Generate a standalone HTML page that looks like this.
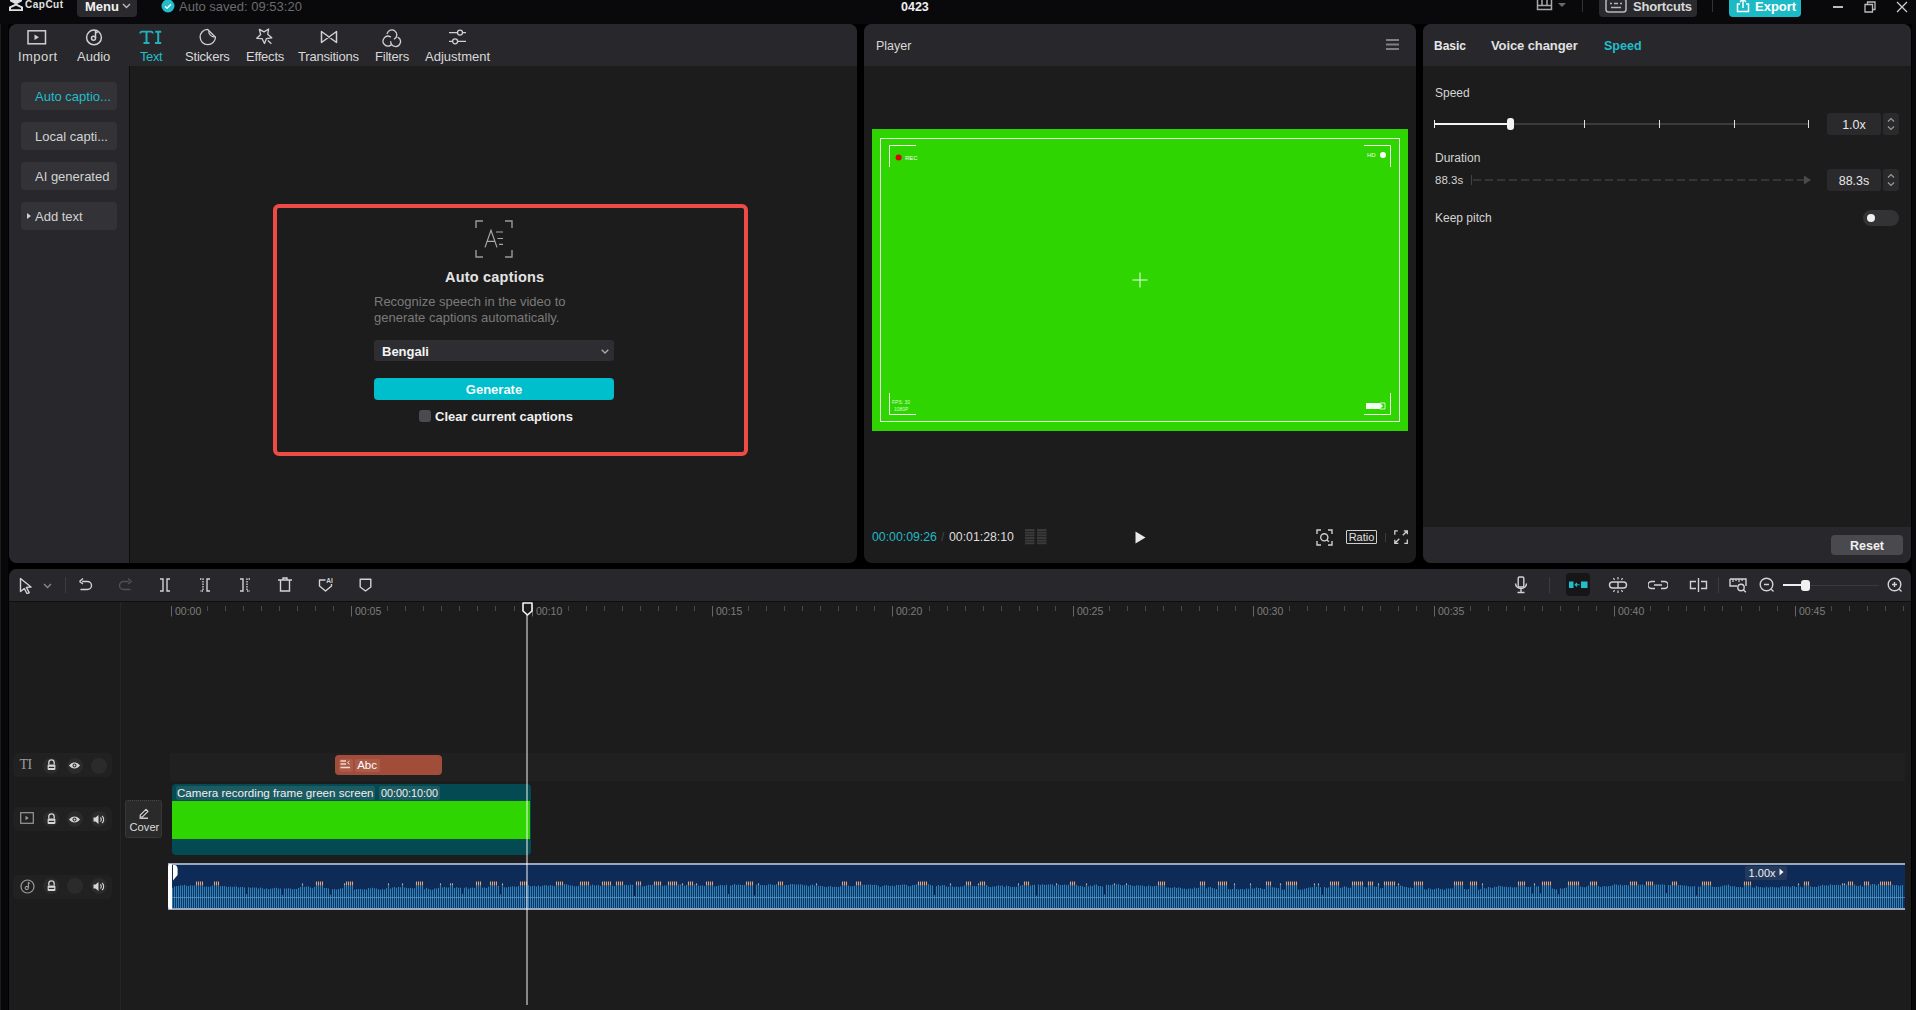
<!DOCTYPE html>
<html><head><meta charset="utf-8">
<style>
*{margin:0;padding:0;box-sizing:border-box}
html,body{width:1916px;height:1010px;overflow:hidden;background:#000;font-family:"Liberation Sans",sans-serif;color:#d6d6d6}
.a{position:absolute}
.t{position:absolute;white-space:nowrap;line-height:1}
#title{left:0;top:0;width:1916px;height:24px;background:#09090c}
.panel{position:absolute;background:#1c1c1c;border-radius:8px;overflow:hidden}
.hdr{position:absolute;left:0;top:0;right:0;height:42px;background:#28282c}
.lbl{font-size:13px;color:#d8d8d8}
.sbtn{position:absolute;left:12px;width:96px;height:28px;background:#333337;border-radius:4px}
.sbtn span{position:absolute;left:14px;top:7px;font-size:13px;color:#d2d2d2;white-space:nowrap}
</style></head>
<body>
<div class="a" style="left:0;top:0;width:8px;height:1010px;background:#08080a"></div><div class="a" style="left:0;top:0;width:1px;height:1010px;background:#1c1c1c"></div><div class="a" style="left:1912px;top:0;width:4px;height:1010px;background:#08080a"></div>
<div id="title" class="a">
  <!-- logo -->
  <svg class="a" style="left:9px;top:-2px" width="14" height="13" viewBox="0 0 14 13"><path d="M1 0h12v3.2L7 6.5 1 3.2z" fill="#e0e0e0"/><path d="M1 12.2V9.3L7 6.5l6 2.8v2.9z" fill="none" stroke="#e0e0e0" stroke-width="2"/></svg>
  <div class="t" style="left:25px;top:0.4px;font-size:10px;font-weight:700;color:#e0e0e0;letter-spacing:0.5px">CapCut</div>
  <div class="a" style="left:77px;top:-4px;width:60px;height:21px;background:#2a2a2e;border-radius:4px"></div>
  <div class="t" style="left:85px;top:0px;font-size:13px;font-weight:700;color:#f2f2f2">Menu</div>
  <svg class="a" style="left:122px;top:3px" width="9" height="6" viewBox="0 0 9 6"><path d="M1 1l3.5 3.5L8 1" fill="none" stroke="#bbb" stroke-width="1.4"/></svg>
  <svg class="a" style="left:161px;top:-1px" width="14" height="14" viewBox="0 0 14 14"><circle cx="7" cy="7" r="6.5" fill="#22bdca"/><path d="M4 7.2l2 2 4-4" fill="none" stroke="#fff" stroke-width="1.4"/></svg>
  <div class="t" style="left:179px;top:0px;font-size:13px;color:#6b6b6b">Auto saved: 09:53:20</div>
  <div class="t" style="left:901px;top:1px;font-size:12.5px;font-weight:700;color:#f0f0f0">0423</div>
  <!-- layout icon -->
  <svg class="a" style="left:1536px;top:-3px" width="32" height="16" viewBox="0 0 32 16"><path d="M1.5 1.5h14v11h-14z M1.5 8.5h14 M6 1.5v7 M11 1.5v7" fill="none" stroke="#a8a8a8" stroke-width="1.5"/><path d="M22 6h8l-4 4z" fill="#6a6a6a"/></svg>
  <div class="a" style="left:1582px;top:0;width:1px;height:12px;background:#333"></div>
  <div class="a" style="left:1599px;top:-4px;width:98px;height:21px;background:#2a2a2e;border-radius:4px"></div>
  <svg class="a" style="left:1605px;top:-2px" width="22" height="16" viewBox="0 0 22 16"><rect x="1" y="1" width="20" height="13" rx="2.5" fill="none" stroke="#b8b8b8" stroke-width="1.5"/><path d="M5 5.5h2M9 5.5h4M15 5.5h2M6 9.5h10" stroke="#b8b8b8" stroke-width="1.4"/></svg>
  <div class="t" style="left:1633px;top:0px;font-size:13px;font-weight:700;color:#d8d8d8;letter-spacing:-0.2px">Shortcuts</div>
  <div class="a" style="left:1712px;top:0;width:1px;height:12px;background:#333"></div>
  <div class="a" style="left:1729px;top:-4px;width:72px;height:21px;background:#1cbac6;border-radius:4px"></div>
  <svg class="a" style="left:1735px;top:-2px" width="16" height="16" viewBox="0 0 16 16"><path d="M5 6H2.5v7.5h11V6H11 M8 10V1.5 M5 4l3-3 3 3" fill="none" stroke="#fff" stroke-width="1.5"/></svg>
  <div class="t" style="left:1755px;top:0px;font-size:13px;font-weight:700;color:#fff">Export</div>
  <div class="a" style="left:1833px;top:6px;width:10px;height:1.5px;background:#bbb"></div>
  <svg class="a" style="left:1864px;top:1px" width="12" height="12" viewBox="0 0 12 12"><path d="M1 3.5h7.5V11H1z M3.5 3.5V1H11v7.5H8.5" fill="none" stroke="#bbb" stroke-width="1.3"/></svg>
  <svg class="a" style="left:1896px;top:1px" width="12" height="12" viewBox="0 0 12 12"><path d="M1 1l10 10M11 1L1 11" stroke="#ccc" stroke-width="1.3"/></svg>
</div>

<!-- LEFT PANEL -->
<div class="panel" style="left:9px;top:24px;width:848px;height:539px">
  <div class="hdr">
    <svg class="a" style="left:18px;top:6px" width="20" height="15" viewBox="0 0 20 15"><rect x="1" y="0.8" width="17.5" height="13" fill="none" stroke="#d0d0d0" stroke-width="1.5"/><path d="M7.5 4.5v5.5l4.5-2.75z" fill="#d0d0d0"/></svg>
    <svg class="a" style="left:76px;top:5px" width="18" height="17" viewBox="0 0 18 17"><circle cx="9" cy="8.4" r="7.4" fill="none" stroke="#d0d0d0" stroke-width="1.5"/><circle cx="8.5" cy="9.2" r="2" fill="none" stroke="#d0d0d0" stroke-width="1.5"/><path d="M10.5 9V2.5l2 1.5" fill="none" stroke="#d0d0d0" stroke-width="1.5"/></svg>
    <svg class="a" style="left:130px;top:6px" width="24" height="15" viewBox="0 0 24 15"><path d="M1.2 3.6Q1.2 1.6 3 1.6H12Q13.8 1.6 13.8 3.6" fill="none" stroke="#22b0bc" stroke-width="1.8"/><path d="M7.5 2v11 M4.5 12.9h6 M16.2 1.7h6 M19.2 2v11 M16 12.9h6.2" stroke="#22b0bc" stroke-width="2"/></svg>
    <svg class="a" style="left:190px;top:4px" width="19" height="19" viewBox="0 0 19 19"><path d="M8.5 1.3A7.7 7.7 0 1 0 16.5 9.3L8.5 1.3" fill="none" stroke="#d0d0d0" stroke-width="1.3" stroke-linejoin="round"/><path d="M9.6 3.2Q10.2 8.2 15.6 9.2" fill="none" stroke="#d0d0d0" stroke-width="1.2"/></svg>
    <svg class="a" style="left:246px;top:4px" width="20" height="20" viewBox="0 0 20 20"><path d="M9.48 15.50L7.13 10.67L1.78 10.30L5.64 6.58L4.34 1.37L9.07 3.90L13.62 1.05L12.68 6.33L16.79 9.78L11.48 10.52z" fill="none" stroke="#d0d0d0" stroke-width="1.3" stroke-linejoin="round"/><path d="M12.8 12.4l3.6 3.3" stroke="#d0d0d0" stroke-width="1.3"/></svg>
    <svg class="a" style="left:311px;top:6px" width="18" height="14" viewBox="0 0 18 14"><path d="M1.5 1.5v11l15-11v11z" fill="none" stroke="#d0d0d0" stroke-width="1.5" stroke-linejoin="round"/></svg>
    <svg class="a" style="left:373px;top:5px" width="20" height="19" viewBox="0 0 20 19"><path d="M5.17 4.53A4.9 4.9 0 1 1 12.35 10.04 M8.45 7.86A4.9 4.9 0 1 0 8.81 16.11 M8.7 12.6A4.9 4.9 0 1 0 16.05 8.36" fill="none" stroke="#d0d0d0" stroke-width="1.3" stroke-linecap="round"/></svg>
    <svg class="a" style="left:439px;top:5px" width="20" height="16" viewBox="0 0 20 16"><path d="M1 3.6h17 M1 12.3h17" stroke="#d0d0d0" stroke-width="1.2"/><circle cx="12" cy="3.6" r="2.5" fill="#28282c" stroke="#d0d0d0" stroke-width="1.3"/><circle cx="7.1" cy="12.3" r="2.5" fill="#28282c" stroke="#d0d0d0" stroke-width="1.3"/></svg>
    <div class="t lbl" style="left:9px;top:26px;letter-spacing:0.45px">Import</div>
    <div class="t lbl" style="left:68px;top:26px">Audio</div>
    <div class="t lbl" style="left:131px;top:26px;color:#22bdca;letter-spacing:-0.4px">Text</div>
    <div class="t lbl" style="left:176px;top:26px;letter-spacing:-0.2px">Stickers</div>
    <div class="t lbl" style="left:237px;top:26px;letter-spacing:-0.2px">Effects</div>
    <div class="t lbl" style="left:289px;top:26px;letter-spacing:-0.2px">Transitions</div>
    <div class="t lbl" style="left:366px;top:26px;letter-spacing:-0.2px">Filters</div>
    <div class="t lbl" style="left:416px;top:26px">Adjustment</div>
  </div>
  <div class="a" style="left:0;top:42px;width:120px;height:497px;background:#28282c"></div>
  <div class="a" style="left:120px;top:42px;width:1px;height:497px;background:#0c0c0c"></div>
  
  <div class="a" style="left:264px;top:180px;width:475px;height:252px;border:4px solid #ee4a46;border-radius:6px"></div>
  <svg class="a" style="left:466px;top:196px" width="38" height="38" viewBox="0 0 38 38"><path d="M1 8V1h7 M30 1h7v7 M37 30v7h-7 M8 37H1v-7" fill="none" stroke="#9a9a9a" stroke-width="1.4"/><path d="M10 27.4l6-17 6 17 M12.2 21.4h7.6" fill="none" stroke="#a8a8a8" stroke-width="1.2"/><path d="M21 12h7 M22.5 18.5h5.5 M24 24.4h4" stroke="#a8a8a8" stroke-width="1.2"/></svg>
  <div class="t" style="left:436px;top:246px;font-size:14.5px;font-weight:700;color:#e4e4e4;letter-spacing:0.2px">Auto captions</div>
  <div class="t" style="left:365px;top:270px;font-size:13px;color:#7a7a7a;line-height:16px">Recognize speech in the video to<br>generate captions automatically.</div>
  <div class="a" style="left:365px;top:316px;width:240px;height:21px;background:#2e2e32;border-radius:3px"></div>
  <div class="t" style="left:373px;top:321px;font-size:13px;font-weight:700;color:#f4f4f4">Bengali</div>
  <svg class="a" style="left:592px;top:325px" width="8" height="5" viewBox="0 0 8 5"><path d="M0.7 0.7l3.3 3.3 3.3-3.3" fill="none" stroke="#aaa" stroke-width="1.3"/></svg>
  <div class="a" style="left:365px;top:354px;width:240px;height:22px;background:#00bfcc;border-radius:4px"></div>
  <div class="t" style="left:365px;top:359px;width:240px;text-align:center;font-size:13px;font-weight:700;color:#f4fbfc">Generate</div>
  <div class="a" style="left:410px;top:386px;width:12px;height:12px;background:#4b4b4f;border-radius:3px"></div>
  <div class="t" style="left:426px;top:386px;font-size:13px;font-weight:700;color:#f0f0f0">Clear current captions</div>
  <div class="sbtn" style="top:58px"><span style="color:#22bdca">Auto captio...</span></div>
  <div class="sbtn" style="top:98px"><span>Local capti...</span></div>
  <div class="sbtn" style="top:138px"><span>AI generated</span></div>
  <div class="sbtn" style="top:178px"><svg class="a" style="left:6px;top:11px" width="4" height="6" viewBox="0 0 4 6"><path d="M0 0l4 3-4 3z" fill="#d0d0d0"/></svg><span>Add text</span></div>
</div>

<!-- PLAYER -->
<div class="panel" style="left:864px;top:24px;width:552px;height:539px">
  <div class="hdr">
    <div class="t" style="left:12px;top:16px;font-size:12.5px;color:#d8d8d8">Player</div>
    <div class="a" style="left:522px;top:15px;width:13px;height:1.8px;background:#808080;box-shadow:0 4.5px 0 #808080,0 9px 0 #808080"></div>
  </div>
  <div class="a" style="left:8px;top:105px;width:536px;height:302px;background:#2ed500"></div>
  <div class="a" style="left:16px;top:114px;width:520px;height:284px;border:1px solid #e8f8e0"></div>
  <svg class="a" style="left:8px;top:105px" width="536" height="302" viewBox="0 0 536 302">
    <g fill="none" stroke="#f0fff0" stroke-width="1">
      <path d="M17.5 38V16.5H44 M492 16.5h26.5V38 M17.5 264v21.5H44 M492 285.5h26.5V264"/>
      <path d="M260.5 151h15 M268 143.5v15"/>
    </g>
    <circle cx="26.6" cy="28.5" r="3" fill="#e00000"/>
    <text x="33" y="31" font-size="6" fill="#f0fff0" font-family="Liberation Sans">REC</text>
    <text x="495" y="28" font-size="6" fill="#f0fff0" font-family="Liberation Sans">HD</text>
    <circle cx="511" cy="26" r="3" fill="#fff"/>
    <text x="20" y="275" font-size="5" fill="#d8f8d0" font-family="Liberation Sans">FPS: 30</text>
    <text x="22" y="282" font-size="5" fill="#d8f8d0" font-family="Liberation Sans">1080P</text>
    <path d="M494 274h14l3 3-3 3h-14z" fill="#f4fff4"/><path d="M508 274h5v6h-5" fill="none" stroke="#f4fff4" stroke-width="0.8"/>
  </svg>
  <div class="t" style="left:8px;top:507px;font-size:12.3px;color:#22b8c6">00:00:09:26</div>
  <div class="t" style="left:77px;top:507px;font-size:12px;color:#464646">/</div>
  <div class="t" style="left:85px;top:507px;font-size:12.3px;color:#dedede">00:01:28:10</div>
  <svg class="a" style="left:161px;top:505px" width="22" height="16" viewBox="0 0 22 16"><g fill="#3a3a3a"><rect x="0" y="0.00" width="9.5" height="2" /><rect x="0" y="2.65" width="9.5" height="2" /><rect x="0" y="5.30" width="9.5" height="2" /><rect x="0" y="7.95" width="9.5" height="2" /><rect x="0" y="10.60" width="9.5" height="2" /><rect x="0" y="13.25" width="9.5" height="2" /><rect x="12" y="0.00" width="9.5" height="2" /><rect x="12" y="2.65" width="9.5" height="2" /><rect x="12" y="5.30" width="9.5" height="2" /><rect x="12" y="7.95" width="9.5" height="2" /><rect x="12" y="10.60" width="9.5" height="2" /><rect x="12" y="13.25" width="9.5" height="2" /></g></svg>
  <svg class="a" style="left:271px;top:507px" width="11" height="13" viewBox="0 0 11 13"><path d="M0.5 0.5v12l10-6z" fill="#e8e8e8"/></svg>
  <svg class="a" style="left:452px;top:505px" width="17" height="17" viewBox="0 0 17 17"><path d="M1 5V1h4 M12 1h4v4 M16 12v4h-4 M5 16H1v-4" fill="none" stroke="#cfcfcf" stroke-width="1.4"/><circle cx="8.3" cy="8.3" r="3.6" fill="none" stroke="#cfcfcf" stroke-width="1.4"/><path d="M10.8 10.8l2 2" stroke="#cfcfcf" stroke-width="1.4"/></svg>
  <div class="a" style="left:482px;top:506px;width:31px;height:14px;border:1px solid #cfcfcf;border-radius:1px"></div>
  <div class="t" style="left:482px;top:508px;width:31px;text-align:center;font-size:11px;color:#e0e0e0">Ratio</div>
  <div class="a" style="left:521px;top:509px;width:1px;height:9px;background:#3a3a3a"></div>
  <svg class="a" style="left:530px;top:506px" width="15" height="15" viewBox="0 0 15 15"><path d="M0.8 4.7V0.8H3.8 M9.8 0.8H13.3V4.3 M13.3 0.8L8.8 5.3 M0.8 9.8V13.3H4.3 M0.8 13.3L5.3 8.8 M13.3 9.5V13.3H10.3" fill="none" stroke="#d0d0d0" stroke-width="1.3"/></svg>
</div>

<!-- PROPERTIES -->
<div class="panel" style="left:1423px;top:24px;width:488px;height:539px">
  <div class="hdr">
    <div class="t" style="left:11px;top:16px;font-size:12px;font-weight:700;color:#e8e8e8">Basic</div>
    <div class="t" style="left:68px;top:15.2px;font-size:13px;font-weight:700;color:#e0e0e0;letter-spacing:-0.1px">Voice changer</div>
    <div class="t" style="left:181px;top:16px;font-size:12.5px;font-weight:700;color:#22bdca">Speed</div>
  </div>
  <div class="t" style="left:12px;top:63px;font-size:12px;color:#d4d4d4">Speed</div>
  <div class="a" style="left:11px;top:99px;width:375px;height:1.5px;background:#3a3a3c"></div>
  <div class="a" style="left:11px;top:99px;width:76px;height:2px;background:#f2f2f2"></div>
  <div class="a" style="left:11px;top:96px;width:1px;height:8px;background:#f2f2f2"></div>
  <div class="a" style="left:161px;top:96px;width:1px;height:8px;background:#e0e0e0"></div>
  <div class="a" style="left:236px;top:96px;width:1px;height:8px;background:#e0e0e0"></div>
  <div class="a" style="left:311px;top:96px;width:1px;height:8px;background:#e0e0e0"></div>
  <div class="a" style="left:385px;top:96px;width:1px;height:8px;background:#e0e0e0"></div>
  <div class="a" style="left:84px;top:94px;width:7px;height:12px;background:#f4f4f4;border-radius:3px"></div>
  <div class="a" style="left:404px;top:89px;width:54px;height:22px;background:#2a2a2d;border-radius:3px"></div>
  <div class="t" style="left:404px;top:95px;width:54px;text-align:center;font-size:12.5px;color:#e8e8e8">1.0x</div>
  <div class="a" style="left:460px;top:89px;width:16px;height:22px;background:#2a2a2d;border-radius:3px"></div>
  <svg class="a" style="left:463px;top:92px" width="10" height="16" viewBox="0 0 10 16"><path d="M2 5.5L5 2.5 8 5.5 M2 10.5L5 13.5 8 10.5" fill="none" stroke="#9a9a9a" stroke-width="1.2"/></svg>
  <div class="t" style="left:12px;top:128px;font-size:12px;color:#d4d4d4">Duration</div>
  <div class="t" style="left:12px;top:151px;font-size:11.5px;color:#d4d4d4">88.3s</div>
  <svg class="a" style="left:48px;top:150px" width="344" height="12" viewBox="0 0 344 12"><path d="M0.5 1v10" stroke="#444" stroke-width="1"/><path d="M2 6h332" stroke="#3e3e40" stroke-width="1.3" stroke-dasharray="8 4"/><path d="M333 1.5l7 4.5-7 4.5z" fill="#4a4a4c"/></svg>
  <div class="a" style="left:404px;top:145px;width:54px;height:22px;background:#2a2a2d;border-radius:3px"></div>
  <div class="t" style="left:404px;top:151px;width:54px;text-align:center;font-size:12.5px;color:#e8e8e8">88.3s</div>
  <div class="a" style="left:460px;top:145px;width:16px;height:22px;background:#2a2a2d;border-radius:3px"></div>
  <svg class="a" style="left:463px;top:148px" width="10" height="16" viewBox="0 0 10 16"><path d="M2 5.5L5 2.5 8 5.5 M2 10.5L5 13.5 8 10.5" fill="none" stroke="#9a9a9a" stroke-width="1.2"/></svg>
  <div class="t" style="left:12px;top:188px;font-size:12px;color:#d4d4d4">Keep pitch</div>
  <div class="a" style="left:440px;top:186px;width:36px;height:16px;background:#333336;border-radius:8px"></div>
  <div class="a" style="left:444px;top:190px;width:8px;height:8px;background:#f0f0f0;border-radius:50%"></div>
  <div class="a" style="left:0;top:503px;width:488px;height:36px;background:#28282c"></div>
  <div class="a" style="left:408px;top:511px;width:72px;height:20px;background:#4a4a4e;border-radius:4px"></div>
  <div class="t" style="left:408px;top:516px;width:72px;text-align:center;font-size:12.5px;font-weight:700;color:#f0f0f0">Reset</div>
</div>

<!-- TIMELINE -->
<div class="panel" style="left:9px;top:569px;width:1902px;height:450px">
  <div class="a" style="left:0;top:0;width:1902px;height:32px;background:#28282c"></div>
  <div class="a" style="left:0;top:32px;width:1902px;height:1px;background:#0e0e0e"></div>
  <svg class="a" style="left:10px;top:8px" width="14" height="17" viewBox="0 0 14 17"><path d="M1.5 1.5l10.5 8.5-4.6.4 2.8 5.3-2.1 1.1-2.8-5.3-3.8 3z" fill="none" stroke="#d2d2d2" stroke-width="1.4" stroke-linejoin="round"/></svg>
  <svg class="a" style="left:34px;top:14px" width="9" height="6" viewBox="0 0 9 6"><path d="M1 1l3.5 3.5L8 1" fill="none" stroke="#8a8a8a" stroke-width="1.3"/></svg>
  <div class="a" style="left:56px;top:8px;width:1px;height:16px;background:#3c3c3e"></div>
  <svg class="a" style="left:69px;top:8px" width="15" height="15" viewBox="0 0 15 15"><path d="M4 4.5h5.5a4 4 0 0 1 0 8H2.5" fill="none" stroke="#d2d2d2" stroke-width="1.4"/><path d="M1.5 4.5L5 1.5M1.5 4.5L5 7" fill="none" stroke="#d2d2d2" stroke-width="1.4"/></svg>
  <svg class="a" style="left:109px;top:8px" width="15" height="15" viewBox="0 0 15 15"><path d="M11 4.5H5.5a4 4 0 0 0 0 8h7" fill="none" stroke="#505052" stroke-width="1.4"/><path d="M13.5 4.5L10 1.5M13.5 4.5L10 7" fill="none" stroke="#505052" stroke-width="1.4"/></svg>
  <svg class="a" style="left:150px;top:9px" width="12" height="14" viewBox="0 0 12 14"><path d="M1 1h3v12H1 M11 1H8v12h3" fill="none" stroke="#d2d2d2" stroke-width="1.4"/></svg>
  <svg class="a" style="left:190px;top:9px" width="12" height="14" viewBox="0 0 12 14"><path d="M1 1h3v12H1" fill="none" stroke="#d2d2d2" stroke-width="1.4" stroke-dasharray="1.5 1"/><path d="M11 1H8v12h3" fill="none" stroke="#d2d2d2" stroke-width="1.4"/></svg>
  <svg class="a" style="left:230px;top:9px" width="12" height="14" viewBox="0 0 12 14"><path d="M1 1h3v12H1" fill="none" stroke="#d2d2d2" stroke-width="1.4"/><path d="M11 1H8v12h3" fill="none" stroke="#d2d2d2" stroke-width="1.4" stroke-dasharray="1.5 1"/></svg>
  <svg class="a" style="left:268px;top:8px" width="16" height="15" viewBox="0 0 16 15"><path d="M1 3h14 M3.5 3v11h9V3 M6 3V1h4v2" fill="none" stroke="#d2d2d2" stroke-width="1.4"/></svg>
  <svg class="a" style="left:309px;top:7px" width="15" height="16" viewBox="0 0 15 16"><path d="M7.5 4H1.5v6l6 5 6-5V8" fill="none" stroke="#d2d2d2" stroke-width="1.4" stroke-linejoin="round"/><text x="8.2" y="6.5" font-size="6.5" font-weight="700" fill="#d2d2d2" font-family="Liberation Sans">AI</text></svg>
  <svg class="a" style="left:350px;top:9px" width="13" height="14" viewBox="0 0 13 14"><path d="M1.2 1.2h10.6v7.8L6.5 13 1.2 9z" fill="none" stroke="#d2d2d2" stroke-width="1.4" stroke-linejoin="round"/></svg>
  <svg class="a" style="left:1505px;top:7px" width="14" height="18" viewBox="0 0 14 18"><rect x="4.2" y="1" width="5.6" height="10" rx="1.2" fill="none" stroke="#d2d2d2" stroke-width="1.4"/><path d="M1.5 7.5a5.5 5 0 0 0 11 0 M7 12.5v4 M3.5 16.5h7" fill="none" stroke="#d2d2d2" stroke-width="1.4"/></svg>
  <div class="a" style="left:1540px;top:8px;width:1px;height:16px;background:#3c3c3e"></div>
  <div class="a" style="left:1557px;top:4px;width:24px;height:23px;background:#161618;border-radius:4px"></div>
  <svg class="a" style="left:1560px;top:12px" width="19" height="8" viewBox="0 0 19 8"><rect x="0" y="0.5" width="4.5" height="6.5" fill="#22bdca"/><rect x="12" y="0.5" width="6.5" height="6.5" fill="#22bdca"/><path d="M10.5 3.75H6.5M8 2l-1.8 1.75L8 5.5" fill="none" stroke="#22bdca" stroke-width="1.1"/></svg>
  <svg class="a" style="left:1599px;top:7px" width="20" height="18" viewBox="0 0 20 18"><rect x="1.5" y="6" width="17" height="6" rx="3" fill="none" stroke="#d2d2d2" stroke-width="1.4"/><path d="M10 6v6" fill="none" stroke="#d2d2d2" stroke-width="1.4"/><path d="M10 1v2.5M5.5 2l1 2M14.5 2l-1 2M10 14.5V17M5.5 16l1-2M14.5 16l-1-2" stroke="#d2d2d2" stroke-width="1.2"/></svg>
  <svg class="a" style="left:1639px;top:11px" width="20" height="10" viewBox="0 0 20 10"><path d="M7 1.5H3.5a3.5 3.5 0 0 0 0 7H7 M13 1.5h3.5a3.5 3.5 0 0 1 0 7H13 M6 5h8" fill="none" stroke="#d2d2d2" stroke-width="1.4"/></svg>
  <svg class="a" style="left:1680px;top:8px" width="19" height="16" viewBox="0 0 19 16"><path d="M7 4.5H1.5v7H7 M12 4.5h5.5v7H12 M9.5 1v14" fill="none" stroke="#d2d2d2" stroke-width="1.4"/></svg>
  <div class="a" style="left:1709px;top:8px;width:1px;height:16px;background:#3c3c3e"></div>
  <svg class="a" style="left:1720px;top:9px" width="19" height="15" viewBox="0 0 19 15"><path d="M1 1h16v7 M1 1v7h7" fill="none" stroke="#d2d2d2" stroke-width="1.4"/><path d="M4 1v3M7 1v2M10 1v3M13 1v2" stroke="#d2d2d2" stroke-width="1.2"/><circle cx="12" cy="9.5" r="3.2" fill="none" stroke="#d2d2d2" stroke-width="1.4"/><path d="M14.3 11.8l2.5 2.5" fill="none" stroke="#d2d2d2" stroke-width="1.4"/></svg>
  <svg class="a" style="left:1750px;top:8px" width="16" height="16" viewBox="0 0 16 16"><circle cx="7.5" cy="7.5" r="6.3" fill="none" stroke="#d2d2d2" stroke-width="1.4"/><path d="M5 7.5h5 M12 12l2.5 2.5" fill="none" stroke="#d2d2d2" stroke-width="1.4"/></svg>
  <div class="a" style="left:1774px;top:15.5px;width:96px;height:1px;background:#3a3a3c"></div>
  <div class="a" style="left:1774px;top:15px;width:20px;height:2px;background:#eee"></div>
  <div class="a" style="left:1792px;top:11px;width:9px;height:11px;background:#f0f0f0;border-radius:3px"></div>
  <svg class="a" style="left:1878px;top:8px" width="16" height="16" viewBox="0 0 16 16"><circle cx="7.5" cy="7.5" r="6.3" fill="none" stroke="#d2d2d2" stroke-width="1.4"/><path d="M5 7.5h5M7.5 5v5 M12 12l2.5 2.5" fill="none" stroke="#d2d2d2" stroke-width="1.4"/></svg>
  <svg class="a" style="left:0;top:0" width="1902" height="60"><path d="M162.5 37v10.5" stroke="#666" stroke-width="1"/><path d="M180.5 37v5" stroke="#484848" stroke-width="1"/><path d="M198.5 37v5" stroke="#484848" stroke-width="1"/><path d="M216.5 37v5" stroke="#484848" stroke-width="1"/><path d="M234.5 37v5" stroke="#484848" stroke-width="1"/><path d="M252.5 37v5" stroke="#484848" stroke-width="1"/><path d="M270.5 37v5" stroke="#484848" stroke-width="1"/><path d="M288.5 37v5" stroke="#484848" stroke-width="1"/><path d="M306.5 37v5" stroke="#484848" stroke-width="1"/><path d="M324.5 37v5" stroke="#484848" stroke-width="1"/><path d="M342.5 37v10.5" stroke="#666" stroke-width="1"/><path d="M360.5 37v5" stroke="#484848" stroke-width="1"/><path d="M378.5 37v5" stroke="#484848" stroke-width="1"/><path d="M396.5 37v5" stroke="#484848" stroke-width="1"/><path d="M414.5 37v5" stroke="#484848" stroke-width="1"/><path d="M432.5 37v5" stroke="#484848" stroke-width="1"/><path d="M450.5 37v5" stroke="#484848" stroke-width="1"/><path d="M468.5 37v5" stroke="#484848" stroke-width="1"/><path d="M486.5 37v5" stroke="#484848" stroke-width="1"/><path d="M505.5 37v5" stroke="#484848" stroke-width="1"/><path d="M523.5 37v10.5" stroke="#666" stroke-width="1"/><path d="M541.5 37v5" stroke="#484848" stroke-width="1"/><path d="M559.5 37v5" stroke="#484848" stroke-width="1"/><path d="M577.5 37v5" stroke="#484848" stroke-width="1"/><path d="M595.5 37v5" stroke="#484848" stroke-width="1"/><path d="M613.5 37v5" stroke="#484848" stroke-width="1"/><path d="M631.5 37v5" stroke="#484848" stroke-width="1"/><path d="M649.5 37v5" stroke="#484848" stroke-width="1"/><path d="M667.5 37v5" stroke="#484848" stroke-width="1"/><path d="M685.5 37v5" stroke="#484848" stroke-width="1"/><path d="M703.5 37v10.5" stroke="#666" stroke-width="1"/><path d="M721.5 37v5" stroke="#484848" stroke-width="1"/><path d="M739.5 37v5" stroke="#484848" stroke-width="1"/><path d="M757.5 37v5" stroke="#484848" stroke-width="1"/><path d="M775.5 37v5" stroke="#484848" stroke-width="1"/><path d="M793.5 37v5" stroke="#484848" stroke-width="1"/><path d="M811.5 37v5" stroke="#484848" stroke-width="1"/><path d="M829.5 37v5" stroke="#484848" stroke-width="1"/><path d="M847.5 37v5" stroke="#484848" stroke-width="1"/><path d="M865.5 37v5" stroke="#484848" stroke-width="1"/><path d="M883.5 37v10.5" stroke="#666" stroke-width="1"/><path d="M902.5 37v5" stroke="#484848" stroke-width="1"/><path d="M920.5 37v5" stroke="#484848" stroke-width="1"/><path d="M938.5 37v5" stroke="#484848" stroke-width="1"/><path d="M956.5 37v5" stroke="#484848" stroke-width="1"/><path d="M974.5 37v5" stroke="#484848" stroke-width="1"/><path d="M992.5 37v5" stroke="#484848" stroke-width="1"/><path d="M1010.5 37v5" stroke="#484848" stroke-width="1"/><path d="M1028.5 37v5" stroke="#484848" stroke-width="1"/><path d="M1046.5 37v5" stroke="#484848" stroke-width="1"/><path d="M1064.5 37v10.5" stroke="#666" stroke-width="1"/><path d="M1082.5 37v5" stroke="#484848" stroke-width="1"/><path d="M1100.5 37v5" stroke="#484848" stroke-width="1"/><path d="M1118.5 37v5" stroke="#484848" stroke-width="1"/><path d="M1136.5 37v5" stroke="#484848" stroke-width="1"/><path d="M1154.5 37v5" stroke="#484848" stroke-width="1"/><path d="M1172.5 37v5" stroke="#484848" stroke-width="1"/><path d="M1190.5 37v5" stroke="#484848" stroke-width="1"/><path d="M1208.5 37v5" stroke="#484848" stroke-width="1"/><path d="M1226.5 37v5" stroke="#484848" stroke-width="1"/><path d="M1244.5 37v10.5" stroke="#666" stroke-width="1"/><path d="M1262.5 37v5" stroke="#484848" stroke-width="1"/><path d="M1280.5 37v5" stroke="#484848" stroke-width="1"/><path d="M1298.5 37v5" stroke="#484848" stroke-width="1"/><path d="M1317.5 37v5" stroke="#484848" stroke-width="1"/><path d="M1335.5 37v5" stroke="#484848" stroke-width="1"/><path d="M1353.5 37v5" stroke="#484848" stroke-width="1"/><path d="M1371.5 37v5" stroke="#484848" stroke-width="1"/><path d="M1389.5 37v5" stroke="#484848" stroke-width="1"/><path d="M1407.5 37v5" stroke="#484848" stroke-width="1"/><path d="M1425.5 37v10.5" stroke="#666" stroke-width="1"/><path d="M1443.5 37v5" stroke="#484848" stroke-width="1"/><path d="M1461.5 37v5" stroke="#484848" stroke-width="1"/><path d="M1479.5 37v5" stroke="#484848" stroke-width="1"/><path d="M1497.5 37v5" stroke="#484848" stroke-width="1"/><path d="M1515.5 37v5" stroke="#484848" stroke-width="1"/><path d="M1533.5 37v5" stroke="#484848" stroke-width="1"/><path d="M1551.5 37v5" stroke="#484848" stroke-width="1"/><path d="M1569.5 37v5" stroke="#484848" stroke-width="1"/><path d="M1587.5 37v5" stroke="#484848" stroke-width="1"/><path d="M1605.5 37v10.5" stroke="#666" stroke-width="1"/><path d="M1623.5 37v5" stroke="#484848" stroke-width="1"/><path d="M1641.5 37v5" stroke="#484848" stroke-width="1"/><path d="M1659.5 37v5" stroke="#484848" stroke-width="1"/><path d="M1677.5 37v5" stroke="#484848" stroke-width="1"/><path d="M1695.5 37v5" stroke="#484848" stroke-width="1"/><path d="M1713.5 37v5" stroke="#484848" stroke-width="1"/><path d="M1732.5 37v5" stroke="#484848" stroke-width="1"/><path d="M1750.5 37v5" stroke="#484848" stroke-width="1"/><path d="M1768.5 37v5" stroke="#484848" stroke-width="1"/><path d="M1786.5 37v10.5" stroke="#666" stroke-width="1"/><path d="M1804.5 37v5" stroke="#484848" stroke-width="1"/><path d="M1822.5 37v5" stroke="#484848" stroke-width="1"/><path d="M1840.5 37v5" stroke="#484848" stroke-width="1"/><path d="M1858.5 37v5" stroke="#484848" stroke-width="1"/><path d="M1876.5 37v5" stroke="#484848" stroke-width="1"/><path d="M1894.5 37v5" stroke="#484848" stroke-width="1"/></svg>
  <div class="t" style="left:166.0px;top:37.0px;font-size:10.5px;color:#7c7c7c;background:#1c1c1c;padding-right:1px">00:00</div>
  <div class="t" style="left:346.0px;top:37.0px;font-size:10.5px;color:#7c7c7c;background:#1c1c1c;padding-right:1px">00:05</div>
  <div class="t" style="left:527.0px;top:37.0px;font-size:10.5px;color:#7c7c7c;background:#1c1c1c;padding-right:1px">00:10</div>
  <div class="t" style="left:707.0px;top:37.0px;font-size:10.5px;color:#7c7c7c;background:#1c1c1c;padding-right:1px">00:15</div>
  <div class="t" style="left:887.0px;top:37.0px;font-size:10.5px;color:#7c7c7c;background:#1c1c1c;padding-right:1px">00:20</div>
  <div class="t" style="left:1068.0px;top:37.0px;font-size:10.5px;color:#7c7c7c;background:#1c1c1c;padding-right:1px">00:25</div>
  <div class="t" style="left:1248.0px;top:37.0px;font-size:10.5px;color:#7c7c7c;background:#1c1c1c;padding-right:1px">00:30</div>
  <div class="t" style="left:1429.0px;top:37.0px;font-size:10.5px;color:#7c7c7c;background:#1c1c1c;padding-right:1px">00:35</div>
  <div class="t" style="left:1609.0px;top:37.0px;font-size:10.5px;color:#7c7c7c;background:#1c1c1c;padding-right:1px">00:40</div>
  <div class="t" style="left:1790.0px;top:37.0px;font-size:10.5px;color:#7c7c7c;background:#1c1c1c;padding-right:1px">00:45</div>
  <div class="a" style="left:111px;top:33px;width:1px;height:420px;background:#262628"></div>
  <div class="a" style="left:4.4px;top:184.4px;width:99px;height:24px;background:#212121;border-radius:5px"></div>
  <div class="a" style="left:34.0px;top:188.5px;width:16px;height:16px;border-radius:50%;background:#2b2b2b"></div>
  <svg class="a" style="left:34.5px;top:189.0px" width="15" height="15" viewBox="0 0 15 15"><path d="M4.8 6.5V4.6a2.7 2.7 0 0 1 5.4 0V6.5" fill="none" stroke="#d6d6d6" stroke-width="1.3"/><rect x="3.6" y="6.5" width="7.8" height="5.5" rx="1" fill="#d6d6d6"/><rect x="4.8" y="8.8" width="5.4" height="1.2" fill="#2a2a2a"/></svg>
  <div class="a" style="left:57.9px;top:188.5px;width:16px;height:16px;border-radius:50%;background:#2b2b2b"></div>
  <svg class="a" style="left:58.4px;top:189.0px" width="15" height="15" viewBox="0 0 15 15"><path d="M2 7.5c3-4 8-4 11 0-3 4-8 4-11 0z" fill="#d6d6d6"/><circle cx="7.5" cy="7.5" r="2" fill="#2a2a2a"/><circle cx="7.5" cy="7.5" r="1" fill="#d6d6d6"/></svg>
  <div class="a" style="left:81.9px;top:188.5px;width:16px;height:16px;border-radius:50%;background:#2b2b2b"></div>
  <div class="t" style="left:10.5px;top:189.0px;font-family:'Liberation Serif',serif;font-size:14px;color:#9a9a9a;letter-spacing:-0.5px">TI</div>
  <div class="a" style="left:4.4px;top:238.4px;width:99px;height:24px;background:#212121;border-radius:5px"></div>
  <div class="a" style="left:34.0px;top:242.3px;width:16px;height:16px;border-radius:50%;background:#2b2b2b"></div>
  <svg class="a" style="left:34.5px;top:242.8px" width="15" height="15" viewBox="0 0 15 15"><path d="M4.8 6.5V4.6a2.7 2.7 0 0 1 5.4 0V6.5" fill="none" stroke="#d6d6d6" stroke-width="1.3"/><rect x="3.6" y="6.5" width="7.8" height="5.5" rx="1" fill="#d6d6d6"/><rect x="4.8" y="8.8" width="5.4" height="1.2" fill="#2a2a2a"/></svg>
  <div class="a" style="left:57.9px;top:242.3px;width:16px;height:16px;border-radius:50%;background:#2b2b2b"></div>
  <svg class="a" style="left:58.4px;top:242.8px" width="15" height="15" viewBox="0 0 15 15"><path d="M2 7.5c3-4 8-4 11 0-3 4-8 4-11 0z" fill="#d6d6d6"/><circle cx="7.5" cy="7.5" r="2" fill="#2a2a2a"/><circle cx="7.5" cy="7.5" r="1" fill="#d6d6d6"/></svg>
  <div class="a" style="left:81.9px;top:242.3px;width:16px;height:16px;border-radius:50%;background:#2b2b2b"></div>
  <svg class="a" style="left:82.4px;top:242.8px" width="15" height="15" viewBox="0 0 15 15"><path d="M2.5 5.5h2l3-2.5v9l-3-2.5h-2z" fill="#d6d6d6"/><path d="M9.3 5.5a2.5 2.5 0 0 1 0 4 M11 4a4.5 4.5 0 0 1 0 7" fill="none" stroke="#d6d6d6" stroke-width="1.1"/></svg>
  <svg class="a" style="left:11px;top:243px" width="14" height="12" viewBox="0 0 14 12"><rect x="0.7" y="0.7" width="12.6" height="10.6" fill="none" stroke="#9a9a9a" stroke-width="1.2"/><path d="M5.5 3.8v4.4l3.3-2.2z" fill="#9a9a9a"/></svg>
  <div class="a" style="left:4.4px;top:305.6px;width:99px;height:24px;background:#212121;border-radius:5px"></div>
  <div class="a" style="left:34.0px;top:309.3px;width:16px;height:16px;border-radius:50%;background:#2b2b2b"></div>
  <svg class="a" style="left:34.5px;top:309.8px" width="15" height="15" viewBox="0 0 15 15"><path d="M4.8 6.5V4.6a2.7 2.7 0 0 1 5.4 0V6.5" fill="none" stroke="#d6d6d6" stroke-width="1.3"/><rect x="3.6" y="6.5" width="7.8" height="5.5" rx="1" fill="#d6d6d6"/><rect x="4.8" y="8.8" width="5.4" height="1.2" fill="#2a2a2a"/></svg>
  <div class="a" style="left:57.9px;top:309.3px;width:16px;height:16px;border-radius:50%;background:#2b2b2b"></div>
  <div class="a" style="left:81.9px;top:309.3px;width:16px;height:16px;border-radius:50%;background:#2b2b2b"></div>
  <svg class="a" style="left:82.4px;top:309.8px" width="15" height="15" viewBox="0 0 15 15"><path d="M2.5 5.5h2l3-2.5v9l-3-2.5h-2z" fill="#d6d6d6"/><path d="M9.3 5.5a2.5 2.5 0 0 1 0 4 M11 4a4.5 4.5 0 0 1 0 7" fill="none" stroke="#d6d6d6" stroke-width="1.1"/></svg>
  <svg class="a" style="left:10.5px;top:310px" width="15" height="15" viewBox="0 0 15 15"><circle cx="7.5" cy="7.5" r="6.5" fill="none" stroke="#9a9a9a" stroke-width="1.2"/><circle cx="6.8" cy="9" r="1.6" fill="none" stroke="#9a9a9a" stroke-width="1.1"/><path d="M8.4 9V3.5l1.5 1" fill="none" stroke="#9a9a9a" stroke-width="1.1"/></svg>
  <div class="a" style="left:116.3px;top:231.2px;width:37px;height:37.5px;background:#2a2a2a;border:1px dotted #454545;border-radius:3px"></div>
  <svg class="a" style="left:129px;top:237px" width="12" height="13" viewBox="0 0 12 13"><path d="M2.2 9.2L8 3.4l2 2-5.8 5.8H2.2z" fill="none" stroke="#d6d6d6" stroke-width="1.2" stroke-linejoin="round"/><path d="M1.5 12.2h8.5" stroke="#c8c8c8" stroke-width="1.6"/></svg>
  <div class="t" style="left:120.5px;top:252.5px;font-size:11.2px;color:#dcdcdc">Cover</div>
  <div class="a" style="left:161.4px;top:183.5px;width:1734.6px;height:28px;background:#202020"></div>
  <div class="a" style="left:325.8px;top:186.1px;width:107px;height:20.4px;background:#a24d3a;border-radius:4px"></div>
  <div class="a" style="left:329.9px;top:189.5px;width:14px;height:13.2px;background:#ad5b49;border-radius:2px"></div>
  <div class="a" style="left:345.9px;top:189.5px;width:24.7px;height:13.2px;background:#ad5b49;border-radius:2px"></div>
  <svg class="a" style="left:331px;top:191px" width="12" height="9" viewBox="0 0 12 9"><path d="M0.5 1h5.5M0.5 4h5.5M0.5 7.5h9.5" stroke="#f2d8d0" stroke-width="1.3"/><path d="M9.5 1L7.5 2.7l2 1.6" fill="none" stroke="#f2d8d0" stroke-width="1"/></svg>
  <div class="t" style="left:348.2px;top:191.1px;font-size:11.5px;color:#fff">Abc</div>
  <div class="a" style="left:162.5px;top:214.6px;width:359px;height:71px;background:#034a52;border-radius:4px"></div>
  <div class="a" style="left:163px;top:232px;width:358px;height:38px;background:#2ed500"></div>
  <div class="a" style="left:166.6px;top:217px;width:199px;height:13.7px;background:#1c5b62;border-radius:2px"></div>
  <div class="a" style="left:370px;top:217px;width:60.7px;height:13.7px;background:#1c5b62;border-radius:2px"></div>
  <div class="t" style="left:168px;top:217.6px;font-size:11.6px;color:#f0f0f0">Camera recording frame green screen</div>
  <div class="t" style="left:372px;top:218.7px;font-size:10.8px;color:#f0f0f0">00:00:10:00</div>
  <div class="a" style="left:159px;top:294px;width:1737px;height:47px;background:#0e2a56;border-top:2px solid #9aa7bd;border-bottom:2px solid #9aa7bd"></div>
  <svg class="a" style="left:0;top:0" width="1902" height="450"><path d="M163.5 318.7V339M165.5 317.6V339M167.5 317.1V339M169.5 317.1V339M171.5 316.2V339M173.5 316.6V339M175.5 315.8V339M177.5 316.8V339M179.5 316.9V339M181.5 316.2V339M183.5 316.8V339M185.5 316.2V339M187.5 316.6V339M189.5 316.6V339M191.5 316.6V339M193.5 316.6V339M195.5 317.8V339M197.5 317.4V339M199.5 317.8V339M201.5 317.5V339M203.5 316.6V339M205.5 316.6V339M207.5 316.6V339M209.5 316.6V339M211.5 317.3V339M213.5 317.0V339M215.5 316.9V339M217.5 317.7V339M219.5 317.7V339M221.5 317.6V339M223.5 317.9V339M225.5 317.6V339M227.5 317.6V339M229.5 318.4V339M231.5 317.9V339M233.5 318.0V339M235.5 318.4V339M237.5 325.1V339M239.5 318.3V339M241.5 318.7V339M243.5 318.6V339M245.5 318.5V339M247.5 318.6V339M249.5 319.4V339M251.5 318.5V339M253.5 319.3V339M255.5 320.0V339M257.5 319.2V339M259.5 320.2V339M261.5 319.7V339M263.5 319.6V339M265.5 318.9V339M267.5 318.8V339M269.5 319.5V339M271.5 319.4V339M273.5 325.8V339M275.5 319.4V339M277.5 319.5V339M279.5 319.2V339M281.5 319.6V339M283.5 320.2V339M285.5 320.1V339M287.5 320.1V339M289.5 318.9V339M291.5 318.1V339M293.5 314.5V339M295.5 317.9V339M297.5 317.6V339M299.5 317.4V339M301.5 318.6V339M303.5 319.2V339M305.5 318.1V339M307.5 316.6V339M309.5 316.6V339M311.5 316.6V339M313.5 316.6V339M315.5 319.1V339M317.5 319.0V339M319.5 319.6V339M321.5 325.6V339M323.5 320.2V339M325.5 319.9V339M327.5 320.4V339M329.5 320.1V339M331.5 319.6V339M333.5 319.3V339M335.5 314.5V339M337.5 316.6V339M339.5 316.6V339M341.5 316.6V339M343.5 316.6V339M345.5 320.8V339M347.5 320.1V339M349.5 320.0V339M351.5 319.9V339M353.5 320.6V339M355.5 320.3V339M357.5 320.4V339M359.5 319.1V339M361.5 319.5V339M363.5 318.8V339M365.5 319.3V339M367.5 319.5V339M369.5 320.3V339M371.5 320.7V339M373.5 319.9V339M375.5 320.4V339M377.5 319.3V339M379.5 314.5V339M381.5 319.6V339M383.5 318.6V339M385.5 317.9V339M387.5 318.8V339M389.5 318.1V339M391.5 318.2V339M393.5 314.5V339M395.5 318.4V339M397.5 318.7V339M399.5 319.3V339M401.5 318.8V339M403.5 319.2V339M405.5 319.2V339M407.5 316.6V339M409.5 316.6V339M411.5 316.6V339M413.5 316.6V339M415.5 320.2V339M417.5 318.8V339M419.5 319.8V339M421.5 320.6V339M423.5 320.7V339M425.5 319.6V339M427.5 319.6V339M429.5 318.8V339M431.5 314.5V339M433.5 318.5V339M435.5 317.9V339M437.5 318.4V339M439.5 318.4V339M441.5 314.5V339M443.5 314.5V339M445.5 319.0V339M447.5 318.2V339M449.5 318.8V339M451.5 318.8V339M453.5 324.8V339M455.5 318.8V339M457.5 318.3V339M459.5 319.8V339M461.5 318.8V339M463.5 318.5V339M465.5 318.9V339M467.5 316.6V339M469.5 316.6V339M471.5 316.6V339M473.5 318.7V339M475.5 318.6V339M477.5 319.1V339M479.5 317.7V339M481.5 316.6V339M483.5 316.6V339M485.5 316.6V339M487.5 316.6V339M489.5 316.7V339M491.5 325.2V339M493.5 314.5V339M495.5 318.2V339M497.5 318.6V339M499.5 317.8V339M501.5 317.8V339M503.5 317.3V339M505.5 317.4V339M507.5 317.7V339M509.5 316.9V339M511.5 316.6V339M513.5 316.6V339M515.5 316.6V339M517.5 316.6V339M519.5 316.3V339M521.5 317.2V339M523.5 317.0V339M525.5 316.8V339M527.5 317.6V339M529.5 316.4V339M531.5 317.5V339M533.5 316.7V339M535.5 316.2V339M537.5 316.2V339M539.5 316.8V339M541.5 316.1V339M543.5 316.5V339M545.5 317.0V339M547.5 316.6V339M549.5 316.6V339M551.5 316.6V339M553.5 316.6V339M555.5 315.2V339M557.5 315.2V339M559.5 316.1V339M561.5 316.6V339M563.5 316.6V339M565.5 317.3V339M567.5 317.2V339M569.5 316.7V339M571.5 316.6V339M573.5 316.6V339M575.5 316.6V339M577.5 316.6V339M579.5 316.6V339M581.5 316.4V339M583.5 315.5V339M585.5 316.6V339M587.5 316.3V339M589.5 316.1V339M591.5 316.9V339M593.5 316.6V339M595.5 316.6V339M597.5 316.6V339M599.5 316.6V339M601.5 316.6V339M603.5 316.7V339M605.5 317.1V339M607.5 316.6V339M609.5 316.6V339M611.5 316.6V339M613.5 316.6V339M615.5 316.0V339M617.5 315.8V339M619.5 316.2V339M621.5 315.5V339M623.5 315.7V339M625.5 326.9V339M627.5 316.6V339M629.5 316.6V339M631.5 316.6V339M633.5 317.5V339M635.5 317.1V339M637.5 316.5V339M639.5 315.8V339M641.5 316.1V339M643.5 315.8V339M645.5 316.6V339M647.5 316.6V339M649.5 316.6V339M651.5 316.6V339M653.5 316.7V339M655.5 316.6V339M657.5 316.3V339M659.5 316.6V339M661.5 316.6V339M663.5 316.6V339M665.5 316.6V339M667.5 316.6V339M669.5 315.5V339M671.5 315.5V339M673.5 314.5V339M675.5 316.8V339M677.5 316.0V339M679.5 316.6V339M681.5 316.6V339M683.5 316.6V339M685.5 315.5V339M687.5 314.5V339M689.5 316.5V339M691.5 316.4V339M693.5 316.5V339M695.5 317.1V339M697.5 316.6V339M699.5 316.6V339M701.5 316.6V339M703.5 316.6V339M705.5 317.5V339M707.5 317.0V339M709.5 316.6V339M711.5 316.1V339M713.5 316.3V339M715.5 316.5V339M717.5 315.8V339M719.5 324.9V339M721.5 316.5V339M723.5 315.9V339M725.5 315.0V339M727.5 315.9V339M729.5 315.6V339M731.5 315.8V339M733.5 316.1V339M735.5 315.9V339M737.5 316.6V339M739.5 316.6V339M741.5 316.6V339M743.5 316.6V339M745.5 326.4V339M747.5 315.8V339M749.5 314.5V339M751.5 315.9V339M753.5 316.0V339M755.5 316.2V339M757.5 316.3V339M759.5 315.2V339M761.5 315.2V339M763.5 315.8V339M765.5 316.0V339M767.5 315.2V339M769.5 316.6V339M771.5 316.6V339M773.5 316.6V339M775.5 316.3V339M777.5 315.9V339M779.5 315.9V339M781.5 314.9V339M783.5 315.1V339M785.5 315.6V339M787.5 315.4V339M789.5 315.4V339M791.5 315.2V339M793.5 315.8V339M795.5 316.2V339M797.5 316.3V339M799.5 317.2V339M801.5 316.3V339M803.5 315.5V339M805.5 316.4V339M807.5 314.5V339M809.5 316.7V339M811.5 316.8V339M813.5 317.0V339M815.5 317.7V339M817.5 318.0V339M819.5 317.4V339M821.5 317.0V339M823.5 318.0V339M825.5 317.7V339M827.5 317.7V339M829.5 318.1V339M831.5 317.3V339M833.5 316.6V339M835.5 316.6V339M837.5 316.6V339M839.5 316.5V339M841.5 317.3V339M843.5 317.2V339M845.5 316.8V339M847.5 316.6V339M849.5 316.6V339M851.5 316.6V339M853.5 315.7V339M855.5 315.7V339M857.5 315.7V339M859.5 315.8V339M861.5 315.6V339M863.5 316.1V339M865.5 315.8V339M867.5 316.0V339M869.5 316.8V339M871.5 318.0V339M873.5 317.0V339M875.5 316.6V339M877.5 316.1V339M879.5 316.5V339M881.5 317.0V339M883.5 316.5V339M885.5 317.2V339M887.5 315.9V339M889.5 315.9V339M891.5 315.9V339M893.5 315.4V339M895.5 315.5V339M897.5 316.0V339M899.5 317.1V339M901.5 317.1V339M903.5 315.9V339M905.5 315.9V339M907.5 315.2V339M909.5 316.6V339M911.5 316.6V339M913.5 316.6V339M915.5 316.6V339M917.5 316.6V339M919.5 315.2V339M921.5 316.0V339M923.5 316.5V339M925.5 326.1V339M927.5 317.0V339M929.5 316.0V339M931.5 317.1V339M933.5 316.0V339M935.5 316.2V339M937.5 317.4V339M939.5 317.8V339M941.5 314.5V339M943.5 317.5V339M945.5 318.0V339M947.5 317.4V339M949.5 318.1V339M951.5 317.4V339M953.5 317.4V339M955.5 316.4V339M957.5 316.6V339M959.5 316.6V339M961.5 316.6V339M963.5 317.0V339M965.5 317.0V339M967.5 317.2V339M969.5 314.5V339M971.5 316.6V339M973.5 316.6V339M975.5 316.6V339M977.5 316.1V339M979.5 317.4V339M981.5 318.0V339M983.5 317.5V339M985.5 317.4V339M987.5 317.0V339M989.5 316.3V339M991.5 316.7V339M993.5 316.5V339M995.5 318.1V339M997.5 316.5V339M999.5 317.0V339M1001.5 317.8V339M1003.5 318.0V339M1005.5 317.8V339M1007.5 317.7V339M1009.5 314.5V339M1011.5 316.8V339M1013.5 316.1V339M1015.5 316.6V339M1017.5 316.6V339M1019.5 316.6V339M1021.5 316.5V339M1023.5 316.1V339M1025.5 315.7V339M1027.5 326.6V339M1029.5 315.5V339M1031.5 315.9V339M1033.5 315.2V339M1035.5 315.7V339M1037.5 315.8V339M1039.5 315.5V339M1041.5 315.2V339M1043.5 315.5V339M1045.5 316.7V339M1047.5 314.5V339M1049.5 315.6V339M1051.5 316.1V339M1053.5 316.0V339M1055.5 315.6V339M1057.5 316.1V339M1059.5 315.8V339M1061.5 316.6V339M1063.5 316.6V339M1065.5 316.6V339M1067.5 315.7V339M1069.5 316.9V339M1071.5 316.8V339M1073.5 317.2V339M1075.5 318.1V339M1077.5 314.5V339M1079.5 317.2V339M1081.5 316.4V339M1083.5 317.0V339M1085.5 315.8V339M1087.5 315.6V339M1089.5 317.1V339M1091.5 316.9V339M1093.5 317.4V339M1095.5 325.4V339M1097.5 315.7V339M1099.5 315.7V339M1101.5 316.3V339M1103.5 315.6V339M1105.5 314.5V339M1107.5 315.6V339M1109.5 315.1V339M1111.5 316.1V339M1113.5 316.6V339M1115.5 316.1V339M1117.5 314.5V339M1119.5 315.8V339M1121.5 316.1V339M1123.5 316.7V339M1125.5 317.0V339M1127.5 316.3V339M1129.5 316.4V339M1131.5 316.6V339M1133.5 316.6V339M1135.5 317.2V339M1137.5 317.5V339M1139.5 316.4V339M1141.5 316.9V339M1143.5 317.4V339M1145.5 317.0V339M1147.5 316.7V339M1149.5 316.6V339M1151.5 316.6V339M1153.5 316.6V339M1155.5 316.6V339M1157.5 318.6V339M1159.5 318.5V339M1161.5 318.8V339M1163.5 318.8V339M1165.5 318.1V339M1167.5 319.0V339M1169.5 318.6V339M1171.5 318.7V339M1173.5 319.7V339M1175.5 319.5V339M1177.5 320.3V339M1179.5 319.5V339M1181.5 319.6V339M1183.5 319.7V339M1185.5 318.5V339M1187.5 319.3V339M1189.5 318.7V339M1191.5 316.6V339M1193.5 316.6V339M1195.5 316.6V339M1197.5 319.5V339M1199.5 318.2V339M1201.5 318.1V339M1203.5 318.9V339M1205.5 319.5V339M1207.5 320.1V339M1209.5 316.6V339M1211.5 316.6V339M1213.5 316.6V339M1215.5 316.6V339M1217.5 316.6V339M1219.5 320.1V339M1221.5 320.5V339M1223.5 320.0V339M1225.5 314.5V339M1227.5 320.1V339M1229.5 320.6V339M1231.5 320.1V339M1233.5 320.0V339M1235.5 320.5V339M1237.5 319.4V339M1239.5 319.8V339M1241.5 314.5V339M1243.5 319.4V339M1245.5 319.6V339M1247.5 318.4V339M1249.5 319.1V339M1251.5 318.9V339M1253.5 320.0V339M1255.5 320.0V339M1257.5 316.6V339M1259.5 316.6V339M1261.5 316.6V339M1263.5 318.3V339M1265.5 318.6V339M1267.5 318.7V339M1269.5 319.3V339M1271.5 314.5V339M1273.5 320.5V339M1275.5 320.5V339M1277.5 316.6V339M1279.5 316.6V339M1281.5 316.6V339M1283.5 316.6V339M1285.5 316.6V339M1287.5 316.6V339M1289.5 320.5V339M1291.5 320.5V339M1293.5 320.4V339M1295.5 319.8V339M1297.5 319.3V339M1299.5 318.8V339M1301.5 318.3V339M1303.5 318.2V339M1305.5 314.5V339M1307.5 317.8V339M1309.5 314.5V339M1311.5 318.3V339M1313.5 325.8V339M1315.5 317.9V339M1317.5 318.7V339M1319.5 318.6V339M1321.5 316.6V339M1323.5 316.6V339M1325.5 316.6V339M1327.5 316.6V339M1329.5 316.6V339M1331.5 318.9V339M1333.5 318.2V339M1335.5 317.2V339M1337.5 317.9V339M1339.5 318.8V339M1341.5 318.8V339M1343.5 316.6V339M1345.5 316.6V339M1347.5 316.6V339M1349.5 316.6V339M1351.5 316.6V339M1353.5 316.6V339M1355.5 317.9V339M1357.5 318.5V339M1359.5 316.6V339M1361.5 316.6V339M1363.5 316.6V339M1365.5 317.5V339M1367.5 317.8V339M1369.5 314.5V339M1371.5 319.4V339M1373.5 318.9V339M1375.5 316.6V339M1377.5 316.6V339M1379.5 316.6V339M1381.5 316.6V339M1383.5 316.6V339M1385.5 316.6V339M1387.5 317.4V339M1389.5 314.5V339M1391.5 316.6V339M1393.5 317.0V339M1395.5 318.1V339M1397.5 318.0V339M1399.5 318.7V339M1401.5 318.4V339M1403.5 319.1V339M1405.5 316.6V339M1407.5 316.6V339M1409.5 316.6V339M1411.5 316.6V339M1413.5 316.6V339M1415.5 320.2V339M1417.5 320.5V339M1419.5 319.2V339M1421.5 319.8V339M1423.5 320.4V339M1425.5 320.1V339M1427.5 319.5V339M1429.5 318.9V339M1431.5 319.9V339M1433.5 320.3V339M1435.5 320.7V339M1437.5 319.4V339M1439.5 319.5V339M1441.5 319.6V339M1443.5 319.6V339M1445.5 316.6V339M1447.5 316.6V339M1449.5 316.6V339M1451.5 316.6V339M1453.5 316.6V339M1455.5 319.9V339M1457.5 320.5V339M1459.5 320.0V339M1461.5 316.6V339M1463.5 316.6V339M1465.5 316.6V339M1467.5 316.6V339M1469.5 320.7V339M1471.5 319.9V339M1473.5 314.5V339M1475.5 319.3V339M1477.5 319.5V339M1479.5 318.0V339M1481.5 318.5V339M1483.5 319.0V339M1485.5 317.7V339M1487.5 318.0V339M1489.5 316.8V339M1491.5 317.1V339M1493.5 317.5V339M1495.5 317.8V339M1497.5 317.7V339M1499.5 318.3V339M1501.5 317.7V339M1503.5 318.5V339M1505.5 318.3V339M1507.5 318.2V339M1509.5 316.6V339M1511.5 316.6V339M1513.5 316.6V339M1515.5 316.6V339M1517.5 318.1V339M1519.5 318.0V339M1521.5 317.7V339M1523.5 324.4V339M1525.5 314.5V339M1527.5 317.5V339M1529.5 317.2V339M1531.5 324.3V339M1533.5 316.6V339M1535.5 316.6V339M1537.5 316.6V339M1539.5 316.6V339M1541.5 316.6V339M1543.5 319.4V339M1545.5 319.9V339M1547.5 320.5V339M1549.5 325.2V339M1551.5 319.3V339M1553.5 319.8V339M1555.5 319.1V339M1557.5 318.5V339M1559.5 316.6V339M1561.5 316.6V339M1563.5 316.6V339M1565.5 316.6V339M1567.5 316.6V339M1569.5 316.6V339M1571.5 317.6V339M1573.5 317.9V339M1575.5 318.2V339M1577.5 317.7V339M1579.5 316.4V339M1581.5 316.6V339M1583.5 316.6V339M1585.5 316.6V339M1587.5 316.6V339M1589.5 316.9V339M1591.5 318.0V339M1593.5 317.5V339M1595.5 317.1V339M1597.5 317.6V339M1599.5 317.1V339M1601.5 317.1V339M1603.5 316.3V339M1605.5 315.2V339M1607.5 315.4V339M1609.5 316.2V339M1611.5 315.5V339M1613.5 316.5V339M1615.5 316.0V339M1617.5 316.0V339M1619.5 316.5V339M1621.5 316.6V339M1623.5 316.6V339M1625.5 316.6V339M1627.5 316.6V339M1629.5 315.5V339M1631.5 315.8V339M1633.5 315.3V339M1635.5 316.2V339M1637.5 316.6V339M1639.5 316.6V339M1641.5 316.6V339M1643.5 316.6V339M1645.5 315.5V339M1647.5 315.6V339M1649.5 315.6V339M1651.5 315.8V339M1653.5 315.3V339M1655.5 315.7V339M1657.5 324.1V339M1659.5 315.9V339M1661.5 316.1V339M1663.5 316.6V339M1665.5 316.6V339M1667.5 316.6V339M1669.5 316.1V339M1671.5 315.9V339M1673.5 316.4V339M1675.5 316.4V339M1677.5 316.8V339M1679.5 317.3V339M1681.5 317.6V339M1683.5 317.5V339M1685.5 316.9V339M1687.5 326.5V339M1689.5 317.6V339M1691.5 317.5V339M1693.5 316.6V339M1695.5 316.6V339M1697.5 316.6V339M1699.5 316.6V339M1701.5 316.6V339M1703.5 317.7V339M1705.5 318.1V339M1707.5 317.9V339M1709.5 317.7V339M1711.5 317.4V339M1713.5 316.8V339M1715.5 316.5V339M1717.5 316.2V339M1719.5 315.6V339M1721.5 316.9V339M1723.5 317.3V339M1725.5 317.3V339M1727.5 318.0V339M1729.5 318.1V339M1731.5 318.0V339M1733.5 318.6V339M1735.5 316.6V339M1737.5 316.6V339M1739.5 316.6V339M1741.5 316.6V339M1743.5 318.5V339M1745.5 318.4V339M1747.5 316.9V339M1749.5 317.9V339M1751.5 317.9V339M1753.5 318.4V339M1755.5 318.6V339M1757.5 317.8V339M1759.5 318.5V339M1761.5 317.7V339M1763.5 318.0V339M1765.5 318.3V339M1767.5 318.2V339M1769.5 318.6V339M1771.5 318.0V339M1773.5 317.0V339M1775.5 317.6V339M1777.5 317.6V339M1779.5 317.5V339M1781.5 318.2V339M1783.5 317.0V339M1785.5 317.3V339M1787.5 318.1V339M1789.5 314.5V339M1791.5 317.7V339M1793.5 318.3V339M1795.5 316.6V339M1797.5 316.6V339M1799.5 316.6V339M1801.5 317.3V339M1803.5 318.1V339M1805.5 317.7V339M1807.5 317.9V339M1809.5 316.7V339M1811.5 316.7V339M1813.5 315.7V339M1815.5 316.6V339M1817.5 316.2V339M1819.5 316.6V339M1821.5 315.3V339M1823.5 316.0V339M1825.5 315.9V339M1827.5 315.8V339M1829.5 315.7V339M1831.5 316.2V339M1833.5 314.5V339M1835.5 314.5V339M1837.5 315.4V339M1839.5 316.6V339M1841.5 316.6V339M1843.5 316.6V339M1845.5 315.6V339M1847.5 316.7V339M1849.5 316.9V339M1851.5 316.3V339M1853.5 317.7V339M1855.5 316.6V339M1857.5 316.6V339M1859.5 316.6V339M1861.5 315.7V339M1863.5 315.1V339M1865.5 315.1V339M1867.5 316.2V339M1869.5 315.0V339M1871.5 316.6V339M1873.5 316.6V339M1875.5 316.6V339M1877.5 316.6V339M1879.5 316.6V339M1881.5 316.6V339M1883.5 315.8V339M1885.5 316.2V339M1887.5 316.0V339M1889.5 316.4V339M1891.5 316.4V339M1893.5 316.1V339" stroke="#2c82b9" stroke-width="1.1"/><path d="M187.5 312.4V316.6M189.5 312.4V316.6M191.5 312.4V316.6M193.5 312.4V316.6M205.5 312.4V316.6M207.5 312.4V316.6M209.5 312.4V316.6M293.5 314.5V316.0M307.5 312.4V316.6M309.5 312.4V316.6M311.5 312.4V316.6M313.5 312.4V316.6M335.5 314.5V316.0M337.5 312.4V316.6M339.5 312.4V316.6M341.5 312.4V316.6M343.5 312.4V316.6M379.5 314.5V316.0M393.5 314.5V316.0M407.5 312.4V316.6M409.5 312.4V316.6M411.5 312.4V316.6M413.5 312.4V316.6M431.5 314.5V316.0M441.5 314.5V316.0M443.5 314.5V316.0M467.5 312.4V316.6M469.5 312.4V316.6M471.5 312.4V316.6M481.5 312.4V316.6M483.5 312.4V316.6M485.5 312.4V316.6M487.5 312.4V316.6M493.5 314.5V316.0M511.5 312.4V316.6M513.5 312.4V316.6M515.5 312.4V316.6M517.5 312.4V316.6M547.5 312.4V316.6M549.5 312.4V316.6M551.5 312.4V316.6M553.5 312.4V316.6M571.5 312.4V316.6M573.5 312.4V316.6M575.5 312.4V316.6M577.5 312.4V316.6M579.5 312.4V316.6M593.5 312.4V316.6M595.5 312.4V316.6M597.5 312.4V316.6M599.5 312.4V316.6M601.5 312.4V316.6M607.5 312.4V316.6M609.5 312.4V316.6M611.5 312.4V316.6M613.5 312.4V316.6M627.5 312.4V316.6M629.5 312.4V316.6M631.5 312.4V316.6M645.5 312.4V316.6M647.5 312.4V316.6M649.5 312.4V316.6M651.5 312.4V316.6M659.5 312.4V316.6M661.5 312.4V316.6M663.5 312.4V316.6M665.5 312.4V316.6M667.5 312.4V316.6M673.5 314.5V316.0M679.5 312.4V316.6M681.5 312.4V316.6M683.5 312.4V316.6M687.5 314.5V316.0M697.5 312.4V316.6M699.5 312.4V316.6M701.5 312.4V316.6M703.5 312.4V316.6M737.5 312.4V316.6M739.5 312.4V316.6M741.5 312.4V316.6M743.5 312.4V316.6M749.5 314.5V316.0M769.5 312.4V316.6M771.5 312.4V316.6M773.5 312.4V316.6M807.5 314.5V316.0M833.5 312.4V316.6M835.5 312.4V316.6M837.5 312.4V316.6M847.5 312.4V316.6M849.5 312.4V316.6M851.5 312.4V316.6M909.5 312.4V316.6M911.5 312.4V316.6M913.5 312.4V316.6M915.5 312.4V316.6M917.5 312.4V316.6M941.5 314.5V316.0M957.5 312.4V316.6M959.5 312.4V316.6M961.5 312.4V316.6M969.5 314.5V316.0M971.5 312.4V316.6M973.5 312.4V316.6M975.5 312.4V316.6M1009.5 314.5V316.0M1015.5 312.4V316.6M1017.5 312.4V316.6M1019.5 312.4V316.6M1047.5 314.5V316.0M1061.5 312.4V316.6M1063.5 312.4V316.6M1065.5 312.4V316.6M1077.5 314.5V316.0M1105.5 314.5V316.0M1117.5 314.5V316.0M1149.5 312.4V316.6M1151.5 312.4V316.6M1153.5 312.4V316.6M1155.5 312.4V316.6M1191.5 312.4V316.6M1193.5 312.4V316.6M1195.5 312.4V316.6M1209.5 312.4V316.6M1211.5 312.4V316.6M1213.5 312.4V316.6M1215.5 312.4V316.6M1217.5 312.4V316.6M1225.5 314.5V316.0M1241.5 314.5V316.0M1257.5 312.4V316.6M1259.5 312.4V316.6M1261.5 312.4V316.6M1271.5 314.5V316.0M1277.5 312.4V316.6M1279.5 312.4V316.6M1281.5 312.4V316.6M1283.5 312.4V316.6M1285.5 312.4V316.6M1287.5 312.4V316.6M1305.5 314.5V316.0M1309.5 314.5V316.0M1321.5 312.4V316.6M1323.5 312.4V316.6M1325.5 312.4V316.6M1327.5 312.4V316.6M1329.5 312.4V316.6M1343.5 312.4V316.6M1345.5 312.4V316.6M1347.5 312.4V316.6M1349.5 312.4V316.6M1351.5 312.4V316.6M1353.5 312.4V316.6M1359.5 312.4V316.6M1361.5 312.4V316.6M1363.5 312.4V316.6M1369.5 314.5V316.0M1375.5 312.4V316.6M1377.5 312.4V316.6M1379.5 312.4V316.6M1381.5 312.4V316.6M1383.5 312.4V316.6M1385.5 312.4V316.6M1389.5 314.5V316.0M1405.5 312.4V316.6M1407.5 312.4V316.6M1409.5 312.4V316.6M1411.5 312.4V316.6M1413.5 312.4V316.6M1445.5 312.4V316.6M1447.5 312.4V316.6M1449.5 312.4V316.6M1451.5 312.4V316.6M1453.5 312.4V316.6M1461.5 312.4V316.6M1463.5 312.4V316.6M1465.5 312.4V316.6M1467.5 312.4V316.6M1473.5 314.5V316.0M1509.5 312.4V316.6M1511.5 312.4V316.6M1513.5 312.4V316.6M1515.5 312.4V316.6M1525.5 314.5V316.0M1533.5 312.4V316.6M1535.5 312.4V316.6M1537.5 312.4V316.6M1539.5 312.4V316.6M1541.5 312.4V316.6M1559.5 312.4V316.6M1561.5 312.4V316.6M1563.5 312.4V316.6M1565.5 312.4V316.6M1567.5 312.4V316.6M1569.5 312.4V316.6M1581.5 312.4V316.6M1583.5 312.4V316.6M1585.5 312.4V316.6M1587.5 312.4V316.6M1621.5 312.4V316.6M1623.5 312.4V316.6M1625.5 312.4V316.6M1627.5 312.4V316.6M1637.5 312.4V316.6M1639.5 312.4V316.6M1641.5 312.4V316.6M1643.5 312.4V316.6M1663.5 312.4V316.6M1665.5 312.4V316.6M1667.5 312.4V316.6M1693.5 312.4V316.6M1695.5 312.4V316.6M1697.5 312.4V316.6M1699.5 312.4V316.6M1701.5 312.4V316.6M1735.5 312.4V316.6M1737.5 312.4V316.6M1739.5 312.4V316.6M1741.5 312.4V316.6M1789.5 314.5V316.0M1795.5 312.4V316.6M1797.5 312.4V316.6M1799.5 312.4V316.6M1833.5 314.5V316.0M1835.5 314.5V316.0M1839.5 312.4V316.6M1841.5 312.4V316.6M1843.5 312.4V316.6M1855.5 312.4V316.6M1857.5 312.4V316.6M1859.5 312.4V316.6M1871.5 312.4V316.6M1873.5 312.4V316.6M1875.5 312.4V316.6M1877.5 312.4V316.6M1879.5 312.4V316.6M1881.5 312.4V316.6" stroke="#dfa27a" stroke-width="1.1"/><path d="M162 328.5H1896" stroke="#7ab4dc" stroke-width="1" opacity="0.55"/></svg>
  <div class="a" style="left:159px;top:295px;width:3.5px;height:45px;background:#fff;border-radius:2px 0 0 2px"></div>
  <svg class="a" style="left:163.5px;top:295.5px" width="6" height="16" viewBox="0 0 6 16"><path d="M0 0h1.5Q4.6 0 4.6 4.5V10L0 15.5z" fill="#fff"/></svg>
  <div class="a" style="left:1736px;top:297px;width:41.6px;height:13.5px;background:#243a5c;border-radius:2px"></div>
  <div class="t" style="left:1739.6px;top:299.0px;font-size:11px;color:#f0f0f0">1.00x</div>
  <svg class="a" style="left:1770px;top:299px" width="5" height="8" viewBox="0 0 5 8"><path d="M0.5 0.5l4 3.5-4 3.5z" fill="#f0f0f0"/></svg>
  <div class="a" style="left:517px;top:43px;width:2px;height:393px;background:rgba(255,255,255,0.48)"></div>
  <svg class="a" style="left:512.5px;top:33px" width="11" height="14" viewBox="0 0 11 14"><path d="M1 1h9v8l-4.5 4L1 9z" fill="#1c1c1c" stroke="#f4f4f4" stroke-width="1.6" stroke-linejoin="round"/></svg>
</div>
</body></html>
